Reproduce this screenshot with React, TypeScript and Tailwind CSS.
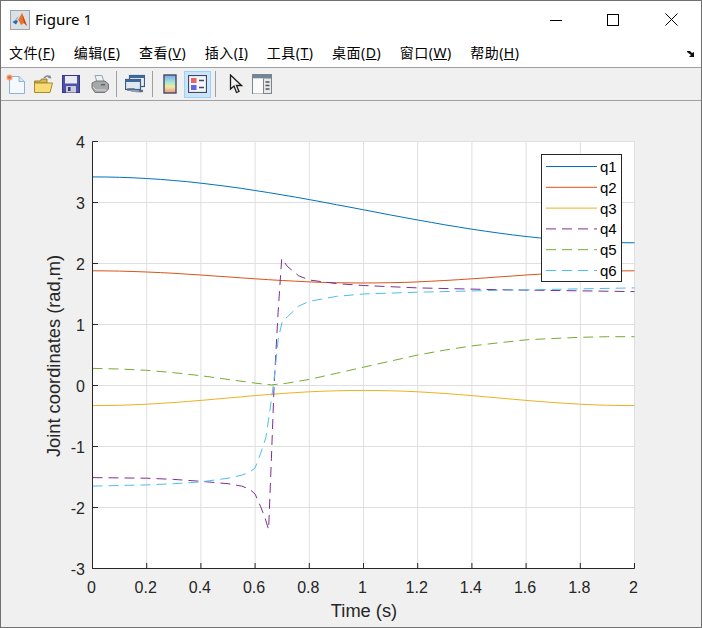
const menus: [string, string][] = [
  ['文件', 'F'],
  ['编辑', 'E'],
  ['查看', 'V'],
  ['插入', 'I'],
  ['工具', 'T'],
  ['桌面', 'D'],
  ['窗口', 'W'],
  ['帮助', 'H'],
]

const px = (t: number) => 92.5 + t * 271
const py = (q: number) => 568.5 - (q + 3) * 61

const sample = (fn: (t: number) => number) =>
  Array.from({ length: 41 }, (_, i) => [i * 0.05, fn(i * 0.05)] as [number, number])

const q4: [number, number][] = [
  [0, -1.51], [0.2, -1.52], [0.3, -1.54], [0.4, -1.57], [0.5, -1.61], [0.55, -1.65], [0.58, -1.7], [0.6, -1.78],
  [0.62, -1.98], [0.635, -2.15], [0.65, -2.36], [0.66, -1.2], [0.67, 0], [0.685, 1.2], [0.698, 2.08], [0.72, 1.95],
  [0.76, 1.8], [0.8, 1.73], [0.9, 1.67], [1, 1.64], [1.2, 1.6], [1.5, 1.57], [2, 1.54],
]
const q5: [number, number][] = [
  [0, 0.28], [0.1, 0.27], [0.2, 0.25], [0.3, 0.21], [0.4, 0.16], [0.5, 0.1], [0.6, 0.04], [0.66, 0.01],
  [0.72, 0.04], [0.8, 0.1], [0.9, 0.2], [1, 0.3], [1.1, 0.4], [1.2, 0.5], [1.3, 0.58], [1.4, 0.65],
  [1.5, 0.7], [1.6, 0.75], [1.7, 0.77], [1.8, 0.79], [1.9, 0.8], [2, 0.8],
]
const q6: [number, number][] = [
  [0, -1.65], [0.2, -1.63], [0.3, -1.61], [0.4, -1.58], [0.5, -1.52], [0.55, -1.47], [0.58, -1.42], [0.6, -1.35],
  [0.62, -1.12], [0.64, -0.85], [0.655, -0.4], [0.67, 0.1], [0.685, 0.75], [0.7, 1.05], [0.72, 1.13], [0.76, 1.3],
  [0.8, 1.38], [0.9, 1.46], [1, 1.5], [1.2, 1.53], [1.5, 1.56], [2, 1.6],
]

const series = [
  { name: 'q1', color: '#0072bd', dash: '', pts: sample((t) => 2.88 + 0.54 * Math.cos((Math.PI * t) / 2)) },
  { name: 'q2', color: '#d95319', dash: '', pts: sample((t) => 1.78 + 0.1 * Math.cos(Math.PI * t)) },
  { name: 'q3', color: '#edb120', dash: '', pts: sample((t) => -0.205 - 0.125 * Math.cos(Math.PI * t)) },
  { name: 'q4', color: '#7e2f8e', dash: '10 6', pts: q4 },
  { name: 'q5', color: '#77ac30', dash: '10 6', pts: q5 },
  { name: 'q6', color: '#4dbeee', dash: '10 6', pts: q6 },
]

const xTicks = [0, 0.2, 0.4, 0.6, 0.8, 1, 1.2, 1.4, 1.6, 1.8, 2]
const yTicks = [-3, -2, -1, 0, 1, 2, 3, 4]

function MatlabLogo() {
  return (
    <svg width="20" height="20" viewBox="0 0 20 20" className="shrink-0">
      <rect x="0.5" y="0.5" width="19" height="19" fill="#d9e0e6" stroke="#a3a3a3" />
      <path d="M2 12 L7 9 L9 6 L4 11 Z" fill="#3f80c0" />
      <path d="M2.5 12 L6 14.5 L8 11 L6 10 Z" fill="#2c6aa8" />
      <path d="M8 10 L12 3 L17 16 L14 13 L11 15 L9 11 Z" fill="#e8742a" />
      <path d="M12 3 L14 13 L17 16 Z" fill="#c9441c" />
    </svg>
  )
}

function Toolbar() {
  return (
    <div className="h-[33px] flex items-center bg-[#f0f0f0] border-b border-[#a0a0a0] pl-[4px] shrink-0">
      {/* new */}
      <svg width="22" height="22" viewBox="0 0 22 22" className="shrink-0">
        <path d="M4.5 3.5 H14 L19.5 8.5 V20.5 H4.5 Z" fill="#f4f9fd" stroke="#8fb2d0" />
        <path d="M14 3.5 V8.5 H19.5" fill="#d5e5f2" stroke="#8fb2d0" />
        <circle cx="4.5" cy="4.5" r="3" fill="#f0a070" />
        <circle cx="4.5" cy="4.5" r="1.3" fill="#e85a20" />
      </svg>
      {/* open */}
      <svg width="22" height="22" viewBox="0 0 22 22" className="ml-[5px] shrink-0">
        <path d="M2.5 8 H8 L9.5 6 H15 V10 H2.5 Z" fill="#d9b453" stroke="#9c7e2d" />
        <path d="M2.5 19.5 V10 H20.5 L18 19.5 Z" fill="#f7dc75" stroke="#a98a32" />
        <path d="M12 5 Q15 1.5 18 4" fill="none" stroke="#7a8fa3" strokeWidth="1.5" />
        <path d="M18 2 L19.5 5.5 L15.5 5 Z" fill="#7a8fa3" />
      </svg>
      {/* save */}
      <svg width="20" height="20" viewBox="0 0 20 20" className="ml-[7px] shrink-0">
        <rect x="1.5" y="1.5" width="17" height="17" fill="#4b50a8" stroke="#34387c" />
        <rect x="4" y="2" width="12" height="7.5" fill="#e9eaf4" />
        <rect x="5" y="12" width="10" height="6.5" fill="#c9cbd8" />
        <rect x="7" y="13" width="2.5" height="4" fill="#34387c" />
      </svg>
      {/* print */}
      <svg width="20" height="20" viewBox="0 0 20 20" className="ml-[9px] shrink-0">
        <path d="M5 1.5 H12 L14 8 H7 Z" fill="#eef1f4" stroke="#9aa3ab" />
        <path d="M2 9 L6 7 H15 L18.5 10 V15 L15 18.5 H5 L2 14 Z" fill="#a5a8a8" stroke="#777" />
        <path d="M3 13 L6 16 H16" fill="none" stroke="#ddd" />
        <rect x="11" y="10" width="4" height="1.5" fill="#666" />
      </svg>
      <div className="w-px h-[26px] bg-[#a0a0a0] ml-[6px] mr-[8px] shrink-0" />
      {/* link */}
      <svg width="20" height="20" viewBox="0 0 20 20" className="shrink-0">
        <rect x="4.5" y="1.5" width="15" height="11" fill="#e8eef4" stroke="#3d5a80" strokeWidth="1.2" />
        <rect x="4.5" y="1.5" width="15" height="2.5" fill="#3d6a9a" />
        <rect x="0.5" y="5.5" width="15" height="10" fill="#dfe8f0" stroke="#3d5a80" strokeWidth="1.2" />
        <rect x="0.5" y="5.5" width="15" height="2.5" fill="#3d6a9a" />
        <path d="M3 15.5 H9 M11 17 H17" stroke="#5a6f85" strokeWidth="2.4" strokeLinecap="round" />
        <path d="M7 17 H13" stroke="#8fa0b0" strokeWidth="2" strokeLinecap="round" />
      </svg>
      <div className="w-px h-[26px] bg-[#a0a0a0] ml-[7px] mr-[10px] shrink-0" />
      {/* colorbar */}
      <svg width="14" height="20" viewBox="0 0 14 20" className="shrink-0">
        <defs>
          <linearGradient id="cb" x1="0" y1="0" x2="0" y2="1">
            <stop offset="0" stopColor="#7aa6e8" />
            <stop offset="0.4" stopColor="#a5e4d5" />
            <stop offset="0.65" stopColor="#eeeaa0" />
            <stop offset="1" stopColor="#ee8f88" />
          </linearGradient>
        </defs>
        <rect x="1" y="1" width="12" height="18" fill="url(#cb)" stroke="#3f4a66" strokeWidth="1.4" />
      </svg>
      {/* legend, pressed */}
      <div className="w-[27px] h-[27px] ml-[7px] bg-[#cce4f7] border border-[#99d1ff] flex items-center justify-center shrink-0">
        <svg width="19" height="18" viewBox="0 0 19 18">
          <rect x="0.5" y="0.5" width="18" height="17" fill="#f4f6fa" stroke="#3f4a66" strokeWidth="1.2" />
          <rect x="3" y="3" width="5.5" height="5" fill="#e86464" />
          <rect x="3" y="10" width="5.5" height="5" fill="#6464e0" />
          <path d="M11 5.5 H16 M11 12.5 H16" stroke="#3f4a66" strokeWidth="1.4" />
        </svg>
      </div>
      <div className="w-px h-[26px] bg-[#a0a0a0] ml-[4px] mr-[13px] shrink-0" />
      {/* pointer */}
      <svg width="14" height="20" viewBox="0 0 14 20" className="shrink-0">
        <path d="M1.5 1 V15 L5 12 L7.5 18.5 L10 17.5 L7.5 11.5 L12.5 11.5 Z" fill="#f4f4f4" stroke="#1a1a1a" strokeWidth="1.3" />
      </svg>
      {/* property panel */}
      <svg width="20" height="20" viewBox="0 0 20 20" className="ml-[9px] shrink-0">
        <rect x="0.5" y="0.5" width="19" height="19" fill="#e8e8e8" stroke="#7d858c" />
        <rect x="1" y="1" width="18" height="3.5" fill="#6f8799" />
        <rect x="1" y="4.5" width="10" height="15" fill="#fafafa" />
        <path d="M11.5 4.5 V19" stroke="#7d858c" />
        <path d="M13.5 8 H17.5 M13.5 11.5 H17.5 M13.5 15 H17.5" stroke="#555" strokeWidth="1.5" />
      </svg>
    </div>
  )
}

function Chart() {
  return (
    <svg viewBox="1 101 700 526" className="w-[700px] h-[526px] block font-['Liberation_Sans',sans-serif]">
      <rect x="92.5" y="141.5" width="542" height="427" fill="#ffffff" />
      {xTicks.map((t) => (
        <line key={t} x1={px(t)} x2={px(t)} y1="141.5" y2="568.5" stroke="#dfdfdf" />
      ))}
      {yTicks.map((q) => (
        <line key={q} x1="92.5" x2="634.5" y1={py(q)} y2={py(q)} stroke="#dfdfdf" />
      ))}
      {series.map((s) => (
        <polyline
          key={s.name}
          points={s.pts.map(([t, q]) => `${px(t).toFixed(1)},${py(q).toFixed(1)}`).join(' ')}
          fill="none"
          stroke={s.color}
          strokeWidth="1"
          strokeDasharray={s.dash}
        />
      ))}
      <path d="M92.5 141.5 V568.5 H634.5" fill="none" stroke="#262626" />
      {xTicks.map((t) => (
        <g key={t}>
          <line x1={px(t)} x2={px(t)} y1="568.5" y2="563" stroke="#262626" />
          <text x={px(t) - 1} y="593" textAnchor="middle" fontSize="16" fill="#262626">
            {t}
          </text>
        </g>
      ))}
      {yTicks.map((q) => (
        <g key={q}>
          <line x1="92.5" x2="98" y1={py(q)} y2={py(q)} stroke="#262626" />
          <text x="85" y={py(q) + 6} textAnchor="end" fontSize="16" fill="#262626">
            {q}
          </text>
        </g>
      ))}
      <text x="364" y="617" textAnchor="middle" fontSize="18.3" fill="#262626">
        Time (s)
      </text>
      <text
        transform="translate(60 356) rotate(-90)"
        textAnchor="middle"
        fontSize="18.3"
        fill="#262626"
      >
        Joint coordinates (rad,m)
      </text>
      <rect x="541.5" y="154.5" width="80" height="127" fill="#ffffff" stroke="#262626" />
      {series.map((s, i) => (
        <g key={s.name}>
          <line
            x1="546"
            x2="597"
            y1={166.5 + i * 20.8}
            y2={166.5 + i * 20.8}
            stroke={s.color}
            strokeWidth="1"
            strokeDasharray={s.dash ? '10 6' : ''}
          />
          <text x="600" y={172 + i * 20.8} fontSize="15" fill="#000000">
            {s.name}
          </text>
        </g>
      ))}
    </svg>
  )
}

export default function App() {
  return (
    <div className="w-[702px] h-[628px] flex flex-col bg-[#f0f0f0] border border-[#707070] overflow-hidden">
      {/* Title bar */}
      <div className="h-[37px] bg-white flex items-center pl-[9px] shrink-0">
        <MatlabLogo />
        <span className="ml-[5px] text-[15px] text-black font-['Noto_Sans',sans-serif]">Figure 1</span>
        <svg width="12" height="12" viewBox="0 0 12 12" className="ml-[458px] shrink-0">
          <path d="M0 6.5 H12" stroke="#000" />
        </svg>
        <svg width="12" height="12" viewBox="0 0 12 12" className="ml-[45px] shrink-0">
          <rect x="0.5" y="0.5" width="11" height="11" fill="none" stroke="#000" />
        </svg>
        <svg width="13" height="13" viewBox="0 0 13 13" className="ml-[46px] shrink-0">
          <path d="M0.5 0.5 L12.5 12.5 M12.5 0.5 L0.5 12.5" stroke="#000" />
        </svg>
      </div>

      {/* Menu bar */}
      <div className="h-[30px] bg-white border-b border-[#a0a0a0] flex items-center pl-[8px] relative shrink-0 text-[14px] tracking-[0.5px] text-black font-['Noto_Sans','Noto_Sans_CJK_SC',sans-serif]">
        {menus.map(([label, key]) => (
          <span key={key} className="mr-[18.5px] whitespace-nowrap leading-none">
            {label}(<span className="underline">{key}</span>)
          </span>
        ))}
        <svg width="10" height="8" viewBox="0 0 10 8" className="absolute right-[5px] top-[12px]">
          <path d="M1 1 L4 1 L6 3 L8 2 L8 7 L3 7 L5 5 L1 2 Z" fill="#111" />
        </svg>
      </div>

      <Toolbar />
      <Chart />
    </div>
  )
}
